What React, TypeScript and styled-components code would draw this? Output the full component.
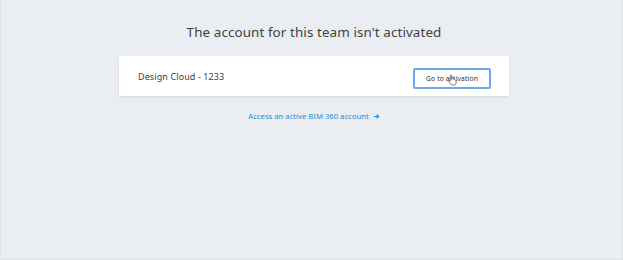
import React from 'react'
import styled, { createGlobalStyle } from 'styled-components'

const GlobalStyle = createGlobalStyle`
  html, body {
    margin: 0;
    padding: 0;
    background: #eaeef3;
  }
  body {
    font-family: "Noto Sans", "Open Sans", sans-serif;
  }
`

const StyledPage = styled.div`
  box-sizing: border-box;
  width: 623px;
  height: 260px;
  border: 1px solid #dfe4ea;
  border-top: 0;
  background: #eaeef3;
  display: flex;
  flex-direction: column;
  align-items: center;
  padding: 21px 0 0 5px;
`

const StyledTitle = styled.h1`
  margin: 0;
  font-size: 13.4px;
  font-weight: 400;
  color: #3f3f3f;
  line-height: 22px;
  letter-spacing: 0.1px;
`

const StyledCard = styled.div`
  box-sizing: border-box;
  margin-top: 13px;
  width: 390px;
  height: 40px;
  background: #ffffff;
  box-shadow: 0 1px 2px rgba(40, 50, 70, 0.12);
  display: flex;
  align-items: center;
  justify-content: space-between;
  padding: 0 18px 0 19px;
`

const StyledTeamName = styled.span`
  font-size: 9px;
  color: #3f3f3f;
  letter-spacing: 0.1px;
`

const StyledButtonWrap = styled.div`
  position: relative;
`

const StyledButton = styled.button`
  box-sizing: border-box;
  width: 78px;
  height: 21px;
  background: #ffffff;
  border: 2px solid #6ea8ea;
  border-radius: 2px;
  font-family: inherit;
  font-size: 6.6px;
  letter-spacing: 0.2px;
  color: #2a2a2a;
  padding: 0;
  cursor: pointer;
`

const StyledCursor = styled.svg`
  position: absolute;
  left: 35px;
  top: 10px;
  width: 9px;
  height: 12px;
`

const StyledLink = styled.a`
  margin-top: 15px;
  font-size: 7.7px;
  color: #1a8fd0;
  text-decoration: none;
  display: flex;
  align-items: center;
  gap: 5px;
`

const Arrow = () => (
  <svg width="6" height="5" viewBox="0 0 6 5">
    <path d="M0 2.5 H4 M2.6 0.6 L4.6 2.5 L2.6 4.4" stroke="#1a8fd0" strokeWidth="1.2" fill="none" />
  </svg>
)

const HandCursor = () => (
  <StyledCursor viewBox="0 0 12 16">
    <path
      d="M4 1.2 C4.6 1.2 5 1.6 5 2.2 V7 L5.4 6.4 C5.9 6.2 6.5 6.4 6.7 6.9 C7.2 6.6 7.9 6.8 8.1 7.3 C8.6 7.1 9.3 7.3 9.5 7.9 C10.2 7.8 10.8 8.3 10.8 9 V11.6 C10.8 13.4 9.6 14.8 7.8 14.8 H6 C4.8 14.8 4 14.2 3.4 13.2 L1.2 9.6 C0.9 9.1 1.1 8.5 1.6 8.3 C2.1 8.1 2.6 8.3 2.9 8.8 L3 9 V2.2 C3 1.6 3.4 1.2 4 1.2 Z"
      fill="#ffffff"
      stroke="#333333"
      strokeWidth="0.9"
    />
  </StyledCursor>
)

const App: React.FC = () => {
  return (
    <>
      <GlobalStyle />
      <StyledPage>
        <StyledTitle>The account for this team isn&#39;t activated</StyledTitle>
        <StyledCard>
          <StyledTeamName>Design Cloud - 1233</StyledTeamName>
          <StyledButtonWrap>
            <StyledButton>Go to activation</StyledButton>
            <HandCursor />
          </StyledButtonWrap>
        </StyledCard>
        <StyledLink href="#">
          Access an active BIM 360 account
          <Arrow />
        </StyledLink>
      </StyledPage>
    </>
  )
}

export default App
